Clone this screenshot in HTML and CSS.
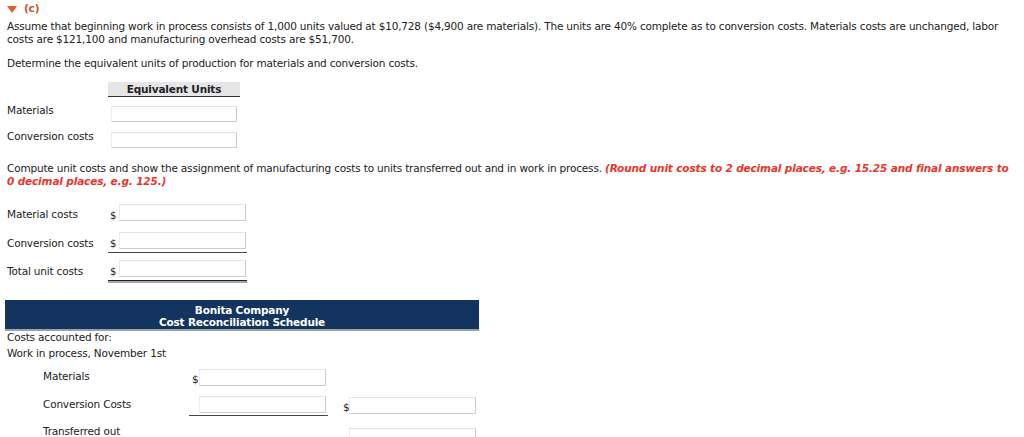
FILE: index.html
```html
<!DOCTYPE html>
<html>
<head>
<meta charset="utf-8">
<link rel="stylesheet" href="styles.css">
</head>
<body>
<div class="page">
  <div class="part-head"><span class="tri"></span><span class="part">(c)</span></div>
  <p class="q">Assume that beginning work in process consists of 1,000 units valued at $10,728 ($4,900 are materials). The units are 40% complete as to conversion costs. Materials costs are unchanged, labor costs are $121,100 and manufacturing overhead costs are $51,700.</p>
  <p class="q q2">Determine the equivalent units of production for materials and conversion costs.</p>

  <div class="eq">
    <div class="eq-blank"></div>
    <div class="eq-head">Equivalent Units</div>
    <div class="eq-lbl">Materials</div>
    <div class="eq-cell"><span class="inp eq-inp"></span></div>
    <div class="eq-lbl">Conversion costs</div>
    <div class="eq-cell"><span class="inp eq-inp"></span></div>
  </div>

  <p class="q q3">Compute unit costs and show the assignment of manufacturing costs to units transferred out and in work in process. <em class="red">(Round unit costs to 2 decimal places, e.g. 15.25 and final answers to 0 decimal places, e.g. 125.)</em></p>

  <div class="uc">
    <div class="uc-row">
      <div class="uc-lbl">Material costs</div>
      <div class="uc-cell"><span class="dol">$</span><span class="inp uc-inp"></span></div>
    </div>
    <div class="uc-row">
      <div class="uc-lbl">Conversion costs</div>
      <div class="uc-cell single"><span class="dol">$</span><span class="inp uc-inp"></span></div>
    </div>
    <div class="uc-row">
      <div class="uc-lbl">Total unit costs</div>
      <div class="uc-cell double"><span class="dol">$</span><span class="inp uc-inp"></span></div>
    </div>
  </div>

  <div class="recon">
    <div class="recon-head">
      <div>Bonita Company</div>
      <div>Cost Reconciliation Schedule</div>
    </div>
    <div class="rc-line">Costs accounted for:</div>
    <div class="rc-line rc-line2">Work in process, November 1st</div>
    <div class="rc-row r-mat">
      <div class="rc-lbl">Materials</div>
      <div class="rc-c1"><span class="dol">$</span><span class="inp rc-inp"></span></div>
      <div class="rc-c2"></div>
    </div>
    <div class="rc-row r-conv">
      <div class="rc-lbl">Conversion Costs</div>
      <div class="rc-c1 single"><span class="dol"></span><span class="inp rc-inp"></span></div>
      <div class="rc-c2"><span class="dol">$</span><span class="inp rc-inp"></span></div>
    </div>
    <div class="rc-row r-trans">
      <div class="rc-lbl">Transferred out</div>
      <div class="rc-c1"></div>
      <div class="rc-c2"><span class="dol"></span><span class="inp rc-inp"></span></div>
    </div>
  </div>
</div>
</body>
</html>
```

FILE: styles.css
```css
html, body {
  margin: 0;
  padding: 0;
  background: #ffffff;
}
body {
  font-family: "DejaVu Sans", Verdana, sans-serif;
  font-size: 10.5px;
  letter-spacing: -0.18px;
  line-height: 13px;
  color: #222222;
  overflow: hidden;
}
.page {
  padding: 2px 0 0 7px;
  width: 1004px;
}
.part-head {
  display: flex;
  align-items: center;
  height: 13px;
}
.tri {
  width: 0;
  height: 0;
  border-left: 5px solid transparent;
  border-right: 5px solid transparent;
  border-top: 7px solid #e0612a;
  margin-right: 7px;
  margin-top: 1px;
}
.part {
  color: #c9551e;
  font-weight: bold;
}
.q {
  margin: 5px 0 0 0;
}
.q2 {
  margin-top: 11px;
}
.q3 {
  margin-top: 13px;
}
.red {
  color: #e8352b;
  font-weight: bold;
  font-style: italic;
  letter-spacing: -0.14px;
}
.eq {
  display: grid;
  grid-template-columns: 101px 132px;
  margin-top: 12px;
  row-gap: 0;
}
.eq-head {
  background: #e6e6e6;
  border-bottom: 1px solid #333333;
  font-weight: bold;
  text-align: center;
  height: 14px;
  line-height: 14px;
}
.eq-lbl {
  height: 26px;
  padding-top: 7px;
  box-sizing: border-box;
}
.eq-cell {
  height: 26px;
  padding: 9px 0 0 3px;
  box-sizing: border-box;
}
.inp {
  display: block;
  box-sizing: border-box;
  border: 1px solid;
  border-color: #e4e4e4 #cccccc #cccccc #ededed;
  background: #ffffff;
}
.eq-inp {
  width: 126px;
  height: 16px;
}
.uc {
  margin-top: 14px;
}
.uc-row {
  display: flex;
  height: 28.5px;
}
.uc-lbl {
  width: 101px;
  padding-top: 6px;
  box-sizing: border-box;
}
.uc-cell {
  display: flex;
  align-items: flex-end;
  width: 139px;
  height: 21px;
  box-sizing: border-box;
  padding-bottom: 3px;
  margin-top: 1px;
}
.uc-cell .dol {
  width: 9px;
  padding-left: 2px;
  font-size: 10px;
  line-height: 10px;
}
.uc-inp {
  width: 127px;
  height: 17px;
}
.single {
  border-bottom: 1px solid #444444;
}
.double {
  border-bottom: 1px solid #222222;
  box-shadow: 0 2px 0 #aaaaaa;
}
.recon {
  margin-top: 12px;
  margin-left: -2px;
}
.recon-head {
  width: 474px;
  height: 25px;
  background: #13345f;
  border-bottom: 2px solid #9aa3ad;
  color: #ffffff;
  font-weight: bold;
  text-align: center;
  line-height: 12px;
  padding-top: 4px;
  box-sizing: content-box;
}
.rc-line {
  padding-left: 2px;
  margin-top: 0;
}
.rc-line2 {
  margin-top: 3px;
}
.rc-row {
  display: flex;
  height: 28px;
}
.r-conv {
  height: 27px;
}
.r-mat {
  margin-top: 3px;
}
.rc-lbl {
  width: 146px;
  padding: 7px 0 0 38px;
}
.rc-c1, .rc-c2 {
  display: flex;
  align-items: flex-end;
  height: 25px;
  box-sizing: border-box;
  padding-bottom: 2px;
}
.rc-c1 {
  width: 139px;
}
.rc-c2 {
  width: 138px;
  margin-left: 11px;
}
.rc-row .dol {
  width: 10px;
  padding-left: 3px;
  box-sizing: border-box;
}
.rc-c2 .dol {
  width: 10px;
  padding-left: 4px;
}
.rc-inp {
  width: 127px;
  height: 17px;
}
.r-trans .rc-c2 {
  align-items: flex-start;
  padding-top: 10px;
}
```
